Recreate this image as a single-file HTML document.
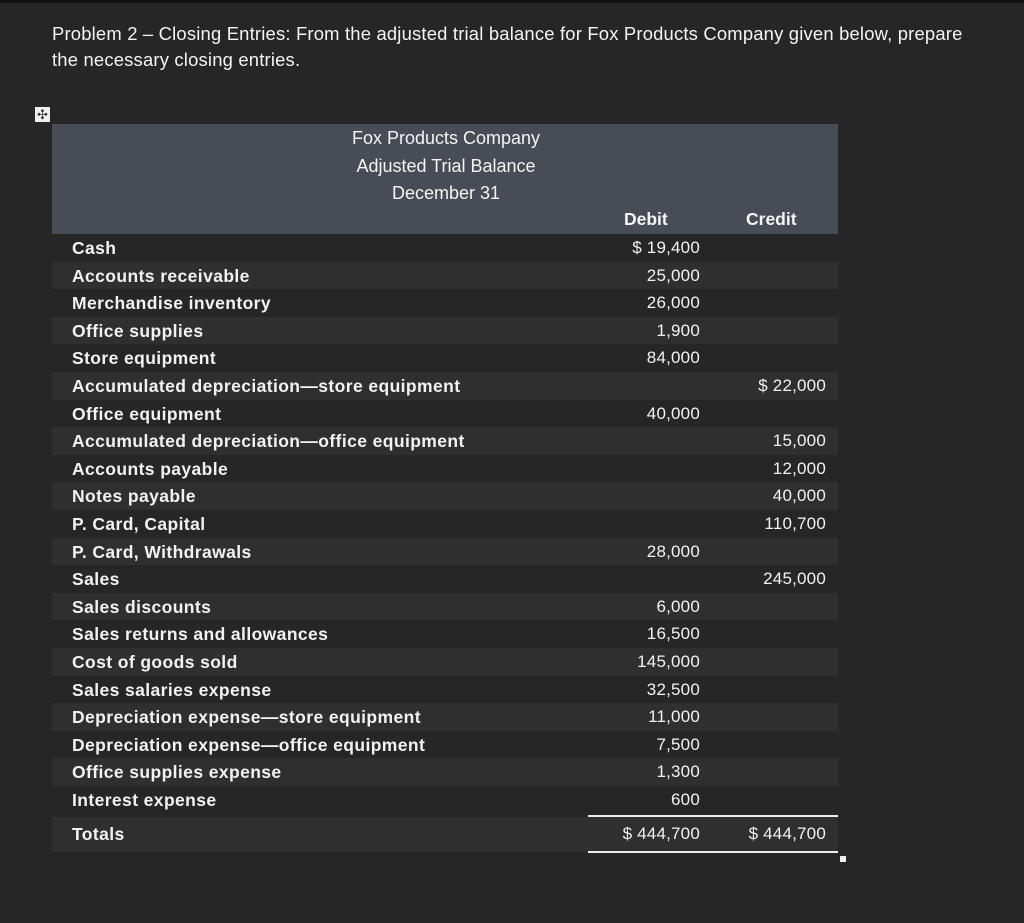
<!DOCTYPE html>
<html><head><meta charset="utf-8"><style>
body{margin:0;width:1024px;height:923px;background:#262626;position:relative;overflow:hidden;font-family:"Liberation Sans",sans-serif;color:#f2f2f2}
.top{position:absolute;left:0;top:0;width:1024px;height:3px;background:#111}
.p{position:absolute;left:52px;top:21px;font-size:18.4px;line-height:26px;color:#f4f4f4;letter-spacing:0.2px}
.mv{position:absolute;left:35px;top:107px;width:15px;height:15px;background:#f0f0f0;color:#333;font-size:13px;line-height:15px;text-align:center}
.hd{position:absolute;left:52px;top:124px;width:786px;height:110px;background:#484c56}
.t{position:absolute;font-size:17.5px;color:#f4f4f4}
.r{position:absolute;left:52px;width:786px;height:27.6px}
.r.a{background:#2f2f2f}
.r span{position:absolute;top:4px;font-size:17px;white-space:nowrap;letter-spacing:0.2px}
.r span.l{left:20px;font-weight:bold;font-size:17.5px;letter-spacing:0.4px}
.d{right:138px}.c{right:12px}
.line{position:absolute;left:588px;width:250px;height:2px;background:#eee}
</style></head><body>
<div class="top"></div>
<div class="p">Problem 2 – Closing Entries: From the adjusted trial balance for Fox Products Company given below, prepare<br>the necessary closing entries.</div>
<div class="mv">✣</div>
<div class="hd"></div>
<div class="t" style="left:316px;top:125px;width:260px;text-align:center;line-height:27.5px;font-size:18px">Fox Products Company<br>Adjusted Trial Balance<br>December 31</div>
<div class="t" style="left:624px;top:209px;font-weight:bold">Debit</div>
<div class="t" style="left:746px;top:209px;font-weight:bold">Credit</div>
<div id="rows"></div>
<script>
var d=[["Cash","$ 19,400",""],["Accounts receivable","25,000",""],["Merchandise inventory","26,000",""],["Office supplies","1,900",""],["Store equipment","84,000",""],["Accumulated depreciation—store equipment","","$ 22,000"],["Office equipment","40,000",""],["Accumulated depreciation—office equipment","","15,000"],["Accounts payable","","12,000"],["Notes payable","","40,000"],["P. Card, Capital","","110,700"],["P. Card, Withdrawals","28,000",""],["Sales","","245,000"],["Sales discounts","6,000",""],["Sales returns and allowances","16,500",""],["Cost of goods sold","145,000",""],["Sales salaries expense","32,500",""],["Depreciation expense—store equipment","11,000",""],["Depreciation expense—office equipment","7,500",""],["Office supplies expense","1,300",""],["Interest expense","600",""]];
var h="";d.forEach(function(x,i){h+='<div class="r'+(i%2?' a':'')+'" style="top:'+(234+i*27.6)+'px"><span class="l">'+x[0]+'</span><span class="d">'+x[1]+'</span><span class="c">'+x[2]+'</span></div>';});
h+='<div class="r a" style="top:817px;height:35px"><span class="l" style="top:7px">Totals</span><span class="d" style="top:7px">$ 444,700</span><span class="c" style="top:7px">$ 444,700</span></div>';
h+='<div class="line" style="top:815px"></div><div class="line" style="top:851px"></div><div style="position:absolute;left:840px;top:856px;width:6px;height:6px;background:#eee"></div>';
document.getElementById("rows").innerHTML=h;
</script>
</body></html>
